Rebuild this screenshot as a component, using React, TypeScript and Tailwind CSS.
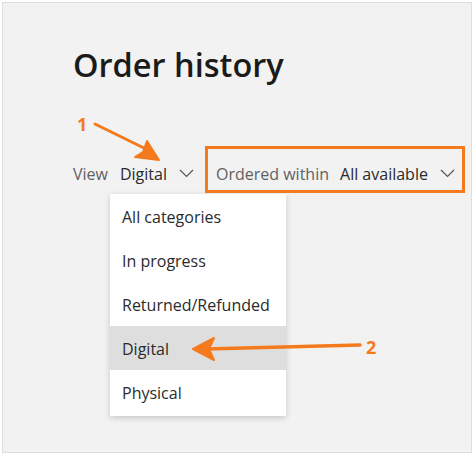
const font = { fontFamily: '"Open Sans", "Noto Sans", Arial, sans-serif' };

const categories = ['All categories', 'In progress', 'Returned/Refunded', 'Digital', 'Physical'];

function Chevron() {
  return (
    <svg width="15" height="9" viewBox="0 0 15 9" className="shrink-0">
      <path d="M1 1l6.5 6.5L14 1" fill="none" stroke="#555" strokeWidth="1.2" />
    </svg>
  );
}

export default function App() {
  return (
    <div className="h-[455px] w-[474px] bg-white p-[2px]" style={font}>
      <div className="relative h-full w-full border border-[#dedede] bg-[#f2f2f2]">
        <h1 className="ml-[70px] pt-[40px] text-[32.5px] font-semibold leading-[44px] text-[#1b1b1b]">
          Order history
        </h1>

        {/* Filters */}
        <div className="mt-[59px] flex items-center">
          <div className="ml-[70px] flex items-center pt-[8px] text-[16px] text-[#2b2b2b]">
            <span className="text-[#616161]">View</span>
            <span className="ml-[12px]">Digital</span>
            <span className="ml-[12px]">
              <Chevron />
            </span>
          </div>
          <div className="ml-[11px] flex h-[47px] w-[260px] items-center border-[3px] border-[#f57a1d] pl-[8px] pt-[8px] text-[16px] text-[#2b2b2b]">
            <span className="text-[#616161]">Ordered within</span>
            <span className="ml-[11px]">All available</span>
            <span className="ml-[12px]">
              <Chevron />
            </span>
          </div>
        </div>

        {/* Dropdown menu */}
        <div className="ml-[107px] mt-[1px] w-[176px] bg-white pb-[2px] shadow-[0_2px_6px_rgba(0,0,0,0.18)]">
          {categories.map((c) => (
            <div
              key={c}
              className={`flex h-[44px] items-center pl-[12px] pt-[2px] text-[16px] text-[#2b2b2b] ${
                c === 'Digital' ? 'bg-[#dedede]' : ''
              }`}
            >
              {c}
            </div>
          ))}
        </div>

        {/* Annotations */}
        <svg className="pointer-events-none absolute left-[-3px] top-[-3px]" width="474" height="455">
          <text x="77" y="131" fill="#f57a1d" fontSize="18" fontWeight="700" style={font}>
            1
          </text>
          <path d="M95 124 L150 151" stroke="#f57a1d" strokeWidth="3" strokeLinecap="round" />
          <path d="M159 160 L135 157 L143 152 L147 141 Z" fill="#f57a1d" stroke="#f57a1d" strokeWidth="2" strokeLinejoin="round" />
          <text x="366" y="354" fill="#f57a1d" fontSize="18" fontWeight="700" style={font}>
            2
          </text>
          <path d="M205 349 L360 345" stroke="#f57a1d" strokeWidth="3.5" strokeLinecap="round" />
          <path d="M193 349 L214 338 L209 349 L214 360 Z" fill="#f57a1d" stroke="#f57a1d" strokeWidth="2" strokeLinejoin="round" />
        </svg>
      </div>
    </div>
  );
}
